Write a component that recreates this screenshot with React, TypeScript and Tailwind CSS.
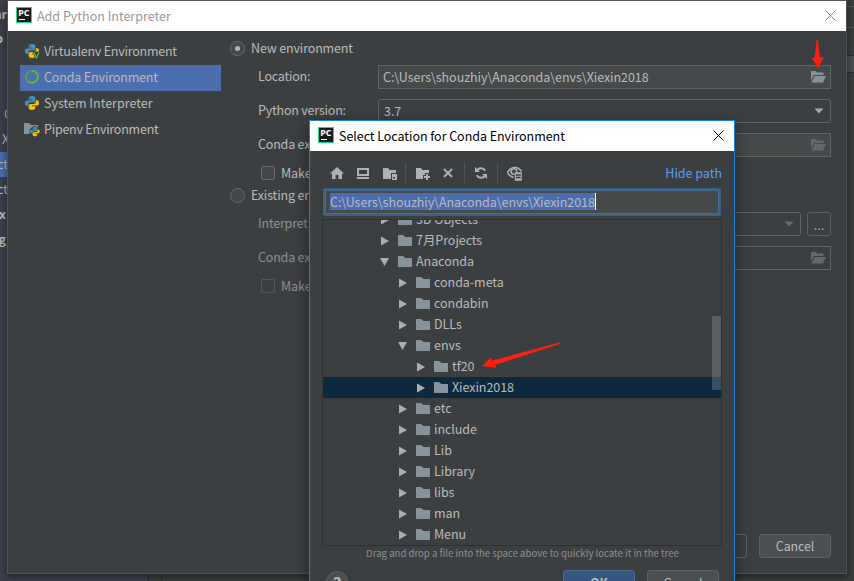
import type { ReactNode } from "react";

const FONT = "font-['Noto_Sans_CJK_SC',sans-serif]";

function PyCharmLogo() {
  return (
    <svg width="16" height="16" viewBox="0 0 16 16" className="mb-[2px] block shrink-0">
      <rect width="16" height="16" fill="#21d789" />
      <rect x="1" y="1" width="14" height="14" fill="#1b1b1b" />
      <text x="2.200" y="8.600" fontSize="8.600" fontWeight="700" fill="#fff" fontFamily="Open Sans, sans-serif" textLength="11.200" lengthAdjust="spacingAndGlyphs">PC</text>
      <rect x="3" y="12" width="6" height="1" fill="#fff" />
    </svg>
  );
}

function PythonShape() {
  return (
    <>
      <path fill="#3f93c4" d="M7.9 1C5.6 1 4.8 2 4.8 3.2v1.6h3.4v.7H3.1C1.6 5.500 1 6.700 1 8.200c0 1.600.7 2.700 2 2.700h1.300V9.300c0-1.200 1-2.100 2.200-2.100h3.200c1 0 1.700-.8 1.700-1.800V3.200C11.400 1.800 10.200 1 7.900 1z" />
      <path fill="#f5c20b" d="M8.100 15c2.300 0 3.200-.9 3.200-2.200v-1.500H7.900v-.7H13c1.500 0 2-1.200 2-2.700 0-1.600-.6-2.700-1.900-2.700h-1.200v1.600c0 1.200-1 2.100-2.200 2.100H6.500c-1 0-1.800.8-1.800 1.800v2.100C4.700 14.200 5.800 15 8.100 15z" />
      <circle cx="6.400" cy="3" r=".6" fill="#3c3f41" />
    </>
  );
}

function EnvIcon({ kind }: { kind: string }) {
  return (
    <svg width="16" height="16" viewBox="0 0 16 16" className="mb-[2px] block shrink-0">
      {(kind === "venv" || kind === "system") && <PythonShape />}
      {kind === "venv" && (
        <>
          <path d="M9 8.500h7V16h-5z" fill="#3c3f41" />
          <path d="M9.900 9.500l2.400 5.500 2.600-5.500" fill="none" stroke="#5fad3c" strokeWidth="1.300" />
        </>
      )}
      {kind === "conda" && (
        <>
          <path d="M8 1.800A6 6 0 1 1 4 12.300" fill="none" stroke="#5fb045" strokeWidth="2.200" />
          <path d="M4 12.300A6 6 0 0 1 8 1.800" fill="none" stroke="#5fb045" strokeWidth="1.800" strokeDasharray="1.500 .8" />
        </>
      )}
      {kind === "pipenv" && (
        <>
          <path d="M0 2h5l2 2h7v9H0z" fill="#87939a" />
          <g transform="translate(5.500 5) scale(.68)">
            <path d="M7 0h2l3 2 4 4v10H4L0 11V6l4-5z" fill="#3c3f41" />
            <PythonShape />
          </g>
        </>
      )}
    </svg>
  );
}

function OpenFolder({ dim }: { dim?: boolean }) {
  return (
    <svg width="16" height="12" viewBox="0 0 16 12" className={dim ? "text-[#5f686c]" : "text-[#87939a]"}>
      <path fill="currentColor" d="M1 0h4.500L7 1.500h6.500V4H4L1 9.500z" />
      <path fill="currentColor" d="M4.600 5H16l-3 6.500H1.500z" />
    </svg>
  );
}

function Label({ children, dim }: { children: ReactNode; dim?: boolean }) {
  return <span className={`mb-[3px] w-[120px] shrink-0 whitespace-nowrap tracking-[-0.2px] ${dim ? "text-[#8d8f90]" : "text-[#bbbbbb]"}`}>{children}</span>;
}

function Radio({ on, children }: { on?: boolean; children: ReactNode }) {
  return (
    <div className="flex h-[16px] items-center gap-[6px] text-[#bbbbbb]">
      <span className="flex size-[15px] items-center justify-center rounded-full border border-[#6b6b6b] bg-[#43494a]">
        {on && <span className="size-[5px] rounded-full bg-[#b4b4b4]" />}
      </span>
      <span className="mb-px whitespace-nowrap tracking-[-0.15px]">{children}</span>
    </div>
  );
}

function Check({ dim }: { dim?: boolean }) {
  return (
    <div className={`ml-[31px] flex h-[14px] items-center gap-[6px] ${dim ? "text-[#8d8f90]" : "text-[#bbbbbb]"}`}>
      <span className={`size-[14px] rounded-[2px] border ${dim ? "border-[#555758]" : "border-[#6b6b6b] bg-[#43494a]"}`} />
      <span className="mb-px whitespace-nowrap">Make</span>
    </div>
  );
}

function Row({ label, dim, children }: { label: string; dim?: boolean; children: ReactNode }) {
  return (
    <div className="ml-[28px] flex h-[24px] items-center">
      <Label dim={dim}>{label}</Label>
      {children}
    </div>
  );
}

function Field({ children, dim, filled, combo }: { children?: ReactNode; dim?: boolean; filled?: boolean; combo?: boolean }) {
  return (
    <div className={`flex h-[24px] grow items-center justify-between border border-[#646464] text-[#bbbbbb] ${filled ? "bg-[#45494a]" : ""} ${combo ? "rounded-[3px] pl-[5px] pr-[6px]" : "pl-[4px] pr-[4px]"}`}>
      <span className={combo ? "mb-px" : "mb-[2px]"}>{children}</span>
      {combo ? (
        <svg width="10" height="6" className={dim ? "text-[#696b6c]" : "text-[#a9abac]"}><path fill="currentColor" d="M.5.5h9L5 5.500z" /></svg>
      ) : (
        <OpenFolder dim={dim} />
      )}
    </div>
  );
}

const envs = [
  ["venv", "Virtualenv Environment", "tracking-[-0.23px]"],
  ["conda", "Conda Environment", "tracking-[-0.15px]"],
  ["system", "System Interpreter", "tracking-normal"],
  ["pipenv", "Pipenv Environment", "tracking-[-0.23px]"],
];

function InterpreterDialog() {
  return (
    <div className="absolute left-[7px] top-0 flex h-[574px] w-[840px] flex-col border border-[#515355] bg-[#3c3f41] shadow-[0_2px_8px_rgba(0,0,0,0.5)]">
      <div className="flex h-[30px] shrink-0 items-center bg-white pl-[8px] pr-[10px] text-[#999999]">
        <PyCharmLogo />
        <span className="mb-[2px] ml-[5px] grow tracking-normal">Add Python Interpreter</span>
        <svg width="11" height="11" className="mb-px text-[#8c8c8c]"><path d="M.5.5l10 10M10.500.5l-10 10" stroke="currentColor" /></svg>
      </div>
      <div className="flex grow pt-[8px]">
        <ul className="ml-[12px] w-[201px] shrink-0">
          {envs.map(([kind, name, tracking]) => (
            <li key={kind} className={`flex h-[26px] items-center gap-[4px] pl-[4px] text-[#bbbbbb] ${kind === "conda" ? "bg-[#4b6eaf]" : ""}`}>
              <EnvIcon kind={kind} />
              <span className={`mb-[3px] whitespace-nowrap ${tracking}`}>{name}</span>
            </li>
          ))}
        </ul>
        <div className="ml-[9px] flex w-[601px] flex-col pt-px">
          <Radio on>New environment</Radio>
          <div className="mt-[9px] flex flex-col gap-[10px]">
            <Row label="Location:"><Field filled>C:\Users\shouzhiy\Anaconda\envs\Xiexin2018</Field></Row>
            <Row label="Python version:"><Field combo>3.7</Field></Row>
            <Row label="Conda ex"><Field filled dim /></Row>
          </div>
          <div className="mt-[9px]"><Check /></div>
          <div className="mt-[7px]"><Radio>Existing en</Radio></div>
          <div className="mt-[9px] flex flex-col gap-[10px]">
            <Row label="Interpret" dim>
              <Field combo dim />
              <span className="ml-[6px] flex h-[24px] w-[24px] items-center justify-center rounded-[3px] border border-[#5e6060] text-[#aaaaaa]">...</span>
            </Row>
            <Row label="Conda ex" dim><Field dim /></Row>
          </div>
          <div className="mt-[9px]"><Check dim /></div>
          <div className="mt-auto mb-[15px] flex justify-end gap-[12px]">
            <span className="h-[24px] w-[72px] rounded-[3px] border border-[#5e6060]" />
            <span className="flex h-[24px] w-[72px] items-center justify-center rounded-[3px] border border-[#5e6060] bg-[#4c5052] text-[#bbbbbb]"><span className="mb-px tracking-[-0.15px]">Cancel</span></span>
          </div>
        </div>
      </div>
    </div>
  );
}

const tree: [number, string, boolean][] = [
  [0, "3D Objects", false],
  [0, "7月Projects", false],
  [0, "Anaconda", true],
  [1, "conda-meta", false],
  [1, "condabin", false],
  [1, "DLLs", false],
  [1, "envs", true],
  [2, "tf20", false],
  [2, "Xiexin2018", false],
  [1, "etc", false],
  [1, "include", false],
  [1, "Lib", false],
  [1, "Library", false],
  [1, "libs", false],
  [1, "man", false],
  [1, "Menu", false],
];
const indent = ["pl-[57px]", "pl-[75px]", "pl-[93px]"];

function Tree() {
  return (
    <div className="relative mx-[12px] mt-[3px] h-[327px] shrink-0 overflow-hidden border border-[#2f3233]">
      <ul className="-mt-[11px]">
        {tree.map(([level, name, open]) => (
          <li key={name} className={`flex h-[21px] items-center ${indent[level]} text-[#bbbbbb] ${name === "Xiexin2018" ? "bg-[#0d293e]" : ""}`}>
            <svg width="10" height="10" className="shrink-0"><path fill="#adadad" d={open ? "M0 1h9L4.500 9z" : "M1 .5l8 4.500L1 9.500z"} /></svg>
            <svg width="14" height="11" className="ml-[8px] mr-[4px] shrink-0"><path fill="#87939a" d="M0 0h5l2.500 2H14v9H0z" /></svg>
            <span className="mb-[3px] whitespace-nowrap">{name}</span>
          </li>
        ))}
      </ul>
      <span className="absolute right-0 top-[96px] h-[74px] w-[9px] bg-[#a6a6a6]/30" />
    </div>
  );
}

function Toolbar() {
  return (
    <div className="flex h-[22px] shrink-0 items-center pl-[18px] pr-[12px]">
      <svg width="196" height="22" viewBox="328 162 196 22" fill="#afb1b3">
        <path d="M337 167l7 6.500h-2v5.500h-3.500v-4h-3v4H332v-5.500h-2z" />
        <path fillRule="evenodd" d="M357 168h12v8h-12zM359 170v4h8v-4zM357 177h12v2h-12z" />
        <path d="M383 168h5l1.500 2h6.500v3h-5v6h-8z" />
        <path fillRule="evenodd" d="M392 174h5v6h-5zM393 177v1.500h2V177z" />
        <path d="M405 163h1v20h-1z" fill="#515355" />
        <path d="M416 168h5l1.500 2h6.500v3h-4v2h-2v4h-7z" />
        <path d="M426 174h2v2h2v2h-2v2h-2v-2h-2v-2h2z" />
        <path d="M444 169l8 8M452 169l-8 8" stroke="#afb1b3" strokeWidth="1.900" />
        <path d="M464 163h1v20h-1zM497 163h1v20h-1z" fill="#515355" />
        <path d="M476.300 171.500a5 5 0 0 1 9-.8M485.700 174.500a5 5 0 0 1-9 .8" fill="none" stroke="#afb1b3" strokeWidth="1.900" />
        <path d="M475 167v5h5zM487 179v-5h-5z" />
        <path d="M507.500 172.500C511 166 518 166 521.500 171.500M507.500 172.500q2 4 6 5" fill="none" stroke="#afb1b3" strokeWidth="1.600" />
        <circle cx="514" cy="171.500" r="2.800" fill="none" stroke="#afb1b3" strokeWidth="1.600" />
        <path fillRule="evenodd" d="M514.500 172h7.500v9h-7.500zM516 174.500h4.500v1H516zM516 177h4.500v1H516z" stroke="#3c3f41" strokeWidth=".5" />
      </svg>
      <span className="mb-px ml-auto whitespace-nowrap tracking-normal text-[#589df6]">Hide path</span>
    </div>
  );
}

function LocationDialog() {
  return (
    <div className="absolute left-[309px] top-[120px] flex h-[480px] w-[426px] flex-col border border-[#1883d7] bg-[#3c3f41] shadow-[0_4px_14px_rgba(0,0,0,0.45)]">
      <div className="flex h-[30px] shrink-0 items-center bg-white pl-[8px] pr-[10px] text-black">
        <PyCharmLogo />
        <span className="mb-[2px] ml-[5px] grow">Select Location for Conda Environment</span>
        <svg width="11" height="11" className="mb-px"><path d="M.5.5l10 10M10.500.5l-10 10" stroke="#000" /></svg>
      </div>
      <div className="h-[11px] shrink-0" />
      <Toolbar />
      <div className="mx-[13px] mt-[4px] h-[28px] shrink-0 rounded-[2px] bg-[#3d6185] p-[2px]">
        <div className="flex h-[24px] items-center border border-[#466d94] bg-[#45494a] pl-[4px]">
          <span className="mb-px flex h-[17px] items-center border-r border-white bg-[#4b6eaf] tracking-[-0.07px] text-[#bbbbbb]">C:\Users\shouzhiy\Anaconda\envs\Xiexin2018</span>
        </div>
      </div>
      <Tree />
      <p className="h-[14px] shrink-0 pl-px text-center text-[9.600px] leading-[14px] tracking-normal text-[#8d8f90]">Drag and drop a file into the space above to quickly locate it in the tree</p>
      <div className="mt-[10px] flex gap-[12px] pl-[16px] text-[#bbbbbb]">
        <span className="mr-auto mt-px flex size-[22px] items-center justify-center rounded-full border border-[#5e6060] bg-[#4c5052] text-[17px] font-bold">?</span>
        <span className="flex h-[24px] w-[72px] items-center justify-center rounded-[3px] border border-[#4c708c] bg-[#365880] font-bold">OK</span>
        <span className="mr-[15px] flex h-[24px] w-[72px] items-center justify-center rounded-[3px] border border-[#5e6060] bg-[#4c5052]">Cancel</span>
      </div>
    </div>
  );
}

function Backdrop() {
  return (
    <div className="flex h-full">
      <div className="relative w-[148px] overflow-hidden bg-[#3c3f4b] text-[#bbbbbb]">
        <span className="absolute left-0 top-[152px] h-[25px] w-[8px] bg-[#4b6eaf]" />
        <span className="absolute right-[141px] top-[5px] font-bold">ar</span>
        <span className="absolute right-[145px] top-[29px] font-bold">o</span>
        <span className="absolute left-[4px] top-[105px]">C</span>
        <span className="absolute left-[2px] top-[130px]">X</span>
        <span className="absolute right-[140px] top-[155px]">ct</span>
        <span className="absolute right-[140px] top-[180px]">ct</span>
        <span className="absolute right-[142px] top-[205px] font-bold">x</span>
        <span className="absolute right-[142px] top-[230px] font-bold">g</span>
      </div>
      <div className="w-[14px] border-x border-[#2b2b2b] bg-[#3a3d3e]" />
      <div className="relative grow bg-[#3a3d3d]">
        <div className="absolute right-0 top-0 flex w-[8px] flex-col">
          <span className="mt-[6px] h-[22px] border-y border-[#555758]" />
          <span className="mt-[27px] h-[18px] border-y border-[#2b2b2b] bg-[#4c5052]" />
        </div>
      </div>
    </div>
  );
}

export default function App() {
  return (
    <div className={`relative h-[581px] w-[854px] overflow-hidden bg-[#3c3f41] text-[12.500px] leading-[17px] tracking-[-0.050px] ${FONT}`}>
      <Backdrop />
      <InterpreterDialog />
      <LocationDialog />
      <svg width="854" height="581" className="pointer-events-none absolute left-0 top-0" fill="#fb2011">
        <path d="M816.500 40l-1.800 17.500-3 .2 6.500 10.800 5.500-11.500-3.700.5L817.800 40z" />
        <path d="M482 366l9-8.500.2 3.200 69-18.400.6 1.400-65.800 21.400 1.500 2.700z" />
      </svg>
    </div>
  );
}
